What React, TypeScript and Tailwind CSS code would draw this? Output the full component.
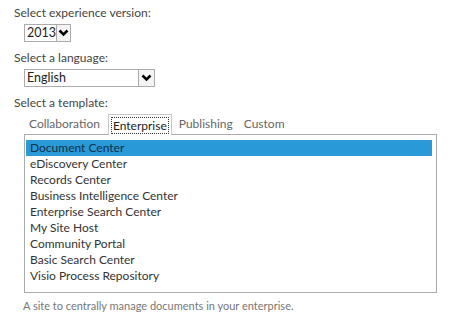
const ITEMS = [
  "Document Center",
  "eDiscovery Center",
  "Records Center",
  "Business Intelligence Center",
  "Enterprise Search Center",
  "My Site Host",
  "Community Portal",
  "Basic Search Center",
  "Visio Process Repository",
];

const TABS = [
  { name: "Collaboration", pad: "pl-[5px] pr-[8px]" },
  { name: "Enterprise", pad: "" },
  { name: "Publishing", pad: "pl-[7px] pr-[11px]" },
  { name: "Custom", pad: "" },
];

function Chevron() {
  return (
    <svg width="11" height="8" viewBox="0 0 11 8" className="block">
      <path d="M1.5 1.5 L5.5 5.5 L9.5 1.5" fill="none" stroke="#000" strokeWidth="2.5" />
    </svg>
  );
}

function FakeSelect({ value, width }: { value: string; width: string }) {
  return (
    <div className={`flex h-[18px] ${width} items-stretch border border-[#ababab] bg-white`}>
      <div className="flex flex-1 items-center pl-[2px] text-[12.5px] leading-none text-[#222]">{value}</div>
      <div className="flex w-[16px] items-center justify-center border-l border-[#ababab] bg-[#f4f4f4]">
        <Chevron />
      </div>
    </div>
  );
}

export default function App() {
  const active = "Enterprise";
  return (
    <div className="h-[332px] w-[474px] overflow-hidden bg-white pl-[14px] pt-[4px] text-[#444] font-['Lato',sans-serif]">
      <p className="text-[12px] leading-[18px]">Select experience version:</p>
      <div className="ml-[10px] mt-[2px]">
        <FakeSelect value="2013" width="w-[47px]" />
      </div>

      <p className="mt-[7px] text-[12px] leading-[18px]">Select a language:</p>
      <div className="ml-[10px] mt-[2px]">
        <FakeSelect value="English" width="w-[131px]" />
      </div>

      <p className="mt-[7px] text-[12px] leading-[18px]">Select a template:</p>

      <div className="ml-[10px] mt-[2px]">
        <div className="flex h-[20px] items-end text-[12px]">
          {TABS.map((t) =>
            t.name === active ? (
              <div key={t.name} className="relative top-[1px] flex h-[21px] items-center border border-b-0 border-[#c6c6c6] bg-white px-[2px]">
                <span className="border border-dotted border-[#333] px-[1px] leading-[15px] text-[#222]">{t.name}</span>
              </div>
            ) : (
              <div key={t.name} className={`flex h-[20px] items-center text-[#666] ${t.pad}`}>
                {t.name}
              </div>
            )
          )}
        </div>
        <div className="h-[159px] w-[413px] border border-[#ababab] bg-white pl-[1px] pr-[4px] pt-[5px]">
          {ITEMS.map((it, i) => (
            <div
              key={it}
              className={`h-[16px] pl-[4px] text-[12px] leading-[16px] ${i === 0 ? "bg-[#2a9ad6] text-[#0c2f4a]" : "text-[#333]"}`}
            >
              {it}
            </div>
          ))}
        </div>
      </div>

      <p className="ml-[9px] mt-[5px] text-[11px] leading-[16px] text-[#777]">A site to centrally manage documents in your enterprise.</p>
    </div>
  );
}
